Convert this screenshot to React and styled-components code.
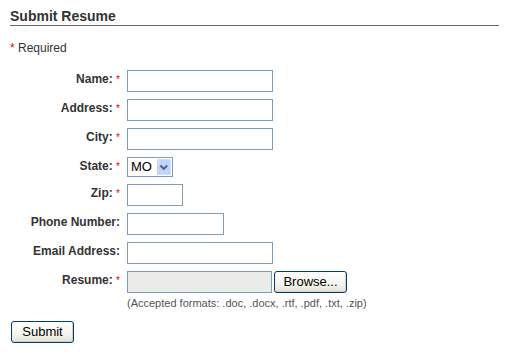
import React from "react";
import styled, { createGlobalStyle } from "styled-components";

const Global = createGlobalStyle`
  html, body { margin: 0; padding: 0; background: #fff; }
  body { font-family: "Liberation Sans", Arial, sans-serif; color: #333; }
`;

const Page = styled.div`
  padding: 8px 6px 0 10px;
`;

const Title = styled.h2`
  margin: 0;
  font-size: 14px;
  line-height: 16px;
  font-weight: bold;
  color: #333;
  padding-bottom: 1px;
  border-bottom: 1px solid #666;
`;

const Required = styled.p`
  margin: 15px 0 0;
  font-size: 12px;
  line-height: 14px;
  color: #333;
`;

const Star = styled.span`
  color: #e00;
  font-size: ${(p) => (p.$small ? "10px" : "12px")};
  font-weight: normal;
`;

const Form = styled.form`
  margin-top: 15px;
  display: grid;
  grid-template-columns: 110px 1fr;
  column-gap: 7px;
  row-gap: 7px;
  align-items: start;
`;

const Label = styled.label`
  text-align: right;
  font-size: 12px;
  line-height: 14px;
  font-weight: bold;
  color: #333;
  padding-top: 2px;
  white-space: nowrap;
`;

const Field = styled.div`
  display: flex;
  flex-direction: column;
  align-items: flex-start;
`;

const TextInput = styled.input`
  box-sizing: border-box;
  width: ${(p) => p.$w}px;
  height: 22px;
  border: 1px solid #7f9db9;
  border-radius: 0;
  padding: 2px 3px;
  margin: 0;
  font-family: "Liberation Sans", Arial, sans-serif;
  font-size: 13px;
  background: #fff;
  outline: none;
`;

const SelectBox = styled.div`
  box-sizing: border-box;
  width: 46px;
  height: 20px;
  border: 1px solid #7f9db9;
  display: flex;
  align-items: center;
  background: #fff;
  padding-right: 1px;
`;

const Select = styled.select`
  appearance: none;
  -webkit-appearance: none;
  border: none;
  outline: none;
  background: transparent;
  font-family: "Liberation Sans", Arial, sans-serif;
  font-size: 13px;
  color: #000;
  padding: 0 0 0 3px;
  margin: 0;
  width: 30px;
  height: 18px;
  line-height: 18px;
`;

const FileRow = styled.div`
  display: flex;
  gap: 2px;
  align-items: flex-start;
`;

const FileBox = styled.div`
  box-sizing: border-box;
  width: 145px;
  height: 22px;
  border: 1px solid #7f9db9;
  background: #ebebe7;
`;

const XPButton = styled.button`
  box-sizing: border-box;
  width: ${(p) => p.$w}px;
  height: 22px;
  border: 1px solid #003c74;
  border-radius: 3px;
  background: linear-gradient(#ffffff 0%, #f5f4ef 60%, #e3e1d8 100%);
  font-family: "Liberation Sans", Arial, sans-serif;
  font-size: 13px;
  color: #000;
  padding: 0;
  margin: 0;
  line-height: 20px;
  box-shadow: inset -1px -1px 0 #d6d0c0;
`;

const Help = styled.div`
  margin-top: 4px;
  font-size: 11px;
  line-height: 13px;
  color: #555;
`;

const SubmitRow = styled.div`
  margin-top: 11px;
  padding-left: 1px;
`;

const Arrow = () => (
  <svg width="14" height="16" viewBox="0 0 14 16" style={{ display: "block" }}>
    <rect x="0" y="0" width="14" height="16" fill="#c1d3fb" />
    <rect x="1" y="1" width="1" height="1" fill="#fff" />
    <rect x="2" y="3" width="1" height="1" fill="#fff" />
    <rect x="1" y="5" width="1" height="1" fill="#fff" />
    <path d="M3.5 6.5 L7 10 L10.5 6.5" stroke="#4d6185" strokeWidth="2" fill="none" />
  </svg>
);

const rows = [
  { label: "Name:", req: true, w: 146 },
  { label: "Address:", req: true, w: 146 },
  { label: "City:", req: true, w: 146 },
  { label: "State:", req: true, select: true },
  { label: "Zip:", req: true, w: 56 },
  { label: "Phone Number:", req: false, w: 97 },
  { label: "Email Address:", req: false, w: 146 },
];

export default function App() {
  return (
    <Page>
      <Global />
      <Title>Submit Resume</Title>
      <Required>
        <Star>*</Star> Required
      </Required>
      <Form onSubmit={(e) => e.preventDefault()}>
        {rows.map((r) => (
          <React.Fragment key={r.label}>
            <Label>
              {r.label}
              {r.req && (
                <>
                  {" "}
                  <Star $small>*</Star>
                </>
              )}
            </Label>
            <Field>
              {r.select ? (
                <SelectBox>
                  <Select defaultValue="MO">
                    <option>MO</option>
                  </Select>
                  <Arrow />
                </SelectBox>
              ) : (
                <TextInput $w={r.w} />
              )}
            </Field>
          </React.Fragment>
        ))}
        <Label>
          Resume: <Star $small>*</Star>
        </Label>
        <Field>
          <FileRow>
            <FileBox />
            <XPButton type="button" $w={73}>Browse...</XPButton>
          </FileRow>
          <Help>(Accepted formats: .doc, .docx, .rtf, .pdf, .txt, .zip)</Help>
        </Field>
      </Form>
      <SubmitRow>
        <XPButton type="submit" $w={63}>Submit</XPButton>
      </SubmitRow>
    </Page>
  );
}
